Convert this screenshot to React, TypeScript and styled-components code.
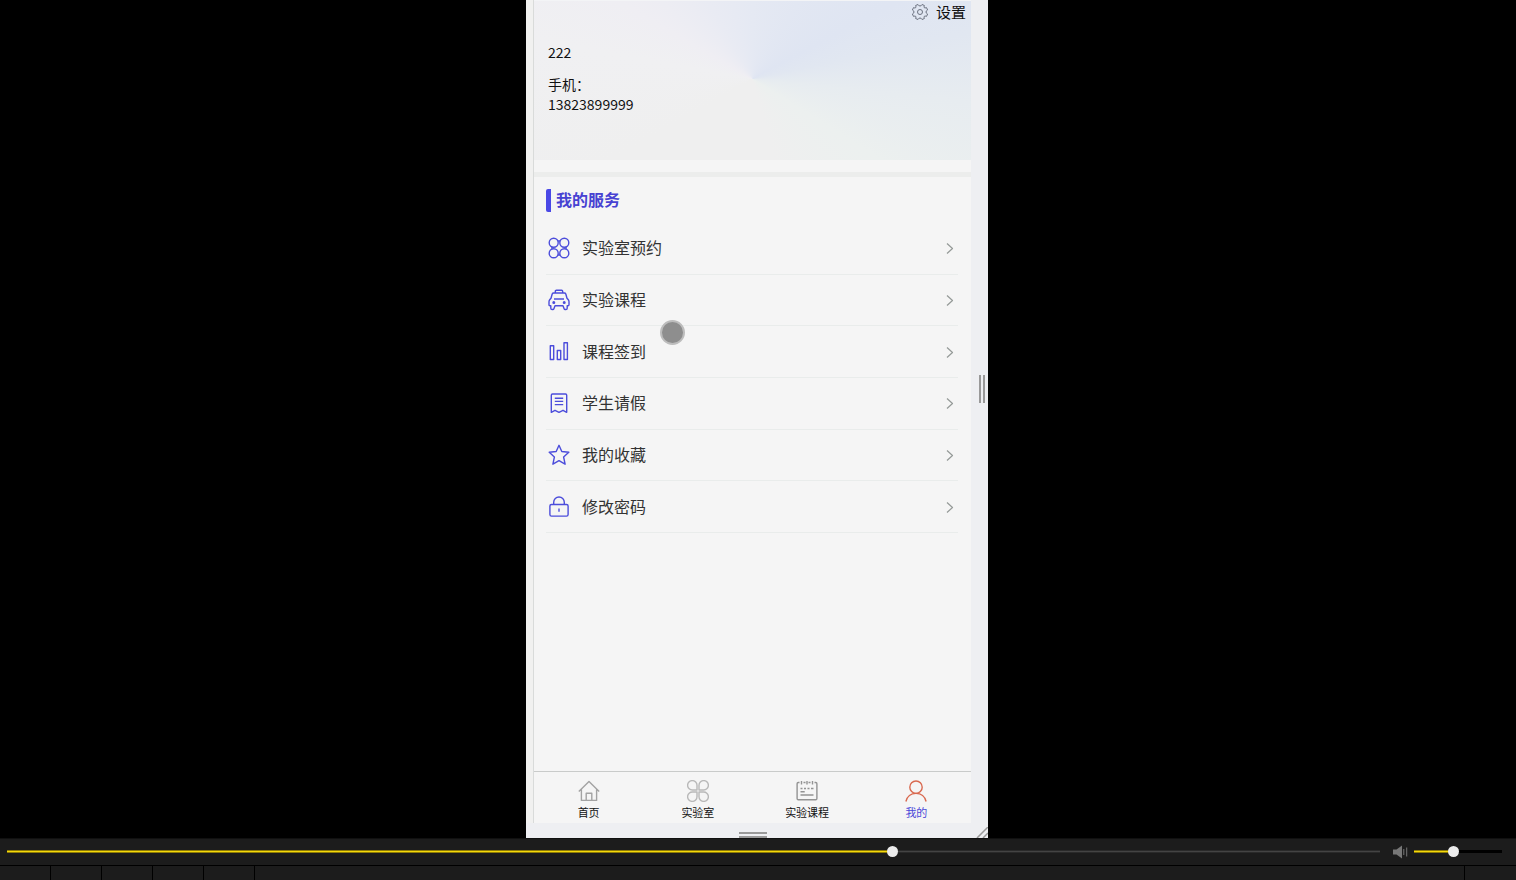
import React, { useState } from "react";
import styled, { createGlobalStyle } from "styled-components";

const GlobalStyle = createGlobalStyle`
  * { box-sizing: border-box; }
  body {
    margin: 0;
    background: #000;
    font-family: "Noto Sans CJK SC", "Noto Sans", sans-serif;
    font-size: 14px;
    line-height: 20px;
    color: #111;
  }
  button { font: inherit; color: inherit; border: 0; background: none; padding: 0; cursor: pointer; }
  ul { list-style: none; margin: 0; padding: 0; }
  h2, p { margin: 0; }
`;

const Page = styled.div`
  min-height: 100vh;
  display: flex;
  flex-direction: column;
`;

const Stage = styled.main`
  flex: 1;
  display: flex;
  justify-content: center;
  padding-right: 2px;
`;

const Device = styled.div`
  position: relative;
  width: 462px;
  max-width: 100%;
  display: grid;
  grid-template-columns: 7px minmax(0, 1fr) 17px;
  grid-template-rows: 1fr 15px;
  background: #eeeff2;
`;

const LeftEdge = styled.div`
  background: #f1f1f0;
`;

const Screen = styled.div`
  display: flex;
  flex-direction: column;
  background: #f5f5f5;
  border-left: 1px solid #d9dbda;
`;

const SideGrip = styled.div`
  display: flex;
  align-items: center;
  padding: 0 3px 46px 8px;
`;

const BottomGrip = styled.div`
  grid-column: 2;
  display: flex;
  justify-content: center;
  align-items: flex-end;
  padding-left: 1px;
`;

const Grip = styled.span<{ $vertical?: boolean }>`
  display: block;
  width: ${(p) => (p.$vertical ? "6px" : "28px")};
  height: ${(p) => (p.$vertical ? "28px" : "6px")};
  border: solid #999;
  border-width: ${(p) => (p.$vertical ? "0 2px" : "2px 0")};
`;

const Corner = styled.svg`
  justify-self: end;
  align-self: end;
`;

const Profile = styled.header`
  height: 160px;
  padding: 1px 5px 0 14px;
  display: flex;
  flex-direction: column;
  border-top: 1px solid #f3f4f6;
  background: conic-gradient(
    from 0deg at 50% 49%,
    #e5e9f3 0deg,
    #dfe5f2 62deg,
    #e1e7f1 78deg,
    #e7ecf0 96deg,
    #ecf0ef 122deg,
    #efefef 165deg,
    #efefef 240deg,
    #f0f0f2 280deg,
    #efeef3 300deg,
    #e9ebf3 330deg,
    #e5e9f3 360deg
  );
`;

const Settings = styled.button`
  align-self: flex-end;
  display: flex;
  align-items: center;
  gap: 7px;
  font-size: 15px;
  line-height: 20px;
`;

const UserName = styled.p`
  margin-top: 20px;
`;

const Phone = styled.p`
  margin-top: 12px;
`;

const PhoneLine = styled.span`
  display: block;
`;

const Divider = styled.div`
  height: 17px;
  border-bottom: 5px solid #ecedec;
`;

const Services = styled.section`
  flex: 1;
  padding: 12px 13px 0 12px;
`;

const Title = styled.h2`
  height: 23px;
  padding-left: 5px;
  border-left: 5px solid #4a48e6;
  border-radius: 2px;
  color: #4742d2;
  font-size: 16px;
  line-height: 20px;
  font-weight: 700;
`;

const ServiceList = styled.ul`
  min-height: 310px;
  margin-top: 11px;
  display: grid;
  grid-auto-rows: 1fr;
`;

const ServiceItem = styled.li`
  display: flex;
  border-bottom: 1px solid #e9eceb;
`;

const ServiceButton = styled.button`
  flex: 1;
  display: flex;
  align-items: center;
  gap: 12px;
  padding: 0 2px;
  color: #333;
  font-size: 16px;
  line-height: 24px;
  text-align: left;
`;

const ServiceLabel = styled.span`
  flex: 1;
  padding-bottom: 2px;
`;

const Icon = styled.svg<{ $color: string; $size?: number }>`
  display: block;
  flex: none;
  width: ${(p) => p.$size ?? 22}px;
  height: ${(p) => p.$size ?? 22}px;
  fill: none;
  stroke: ${(p) => p.$color};
  stroke-width: 1.4;
  stroke-linejoin: round;
`;

const TabBar = styled.nav`
  height: 52px;
  display: grid;
  grid-template-columns: repeat(4, 1fr);
  border-top: 1px solid #c9cbca;
`;

const Tab = styled.button<{ $active?: boolean }>`
  display: flex;
  flex-direction: column;
  align-items: center;
  gap: 2px;
  padding-top: 8px;
  color: ${(p) => (p.$active ? "#4a48d8" : "#111")};
  font-size: 11px;
  line-height: 16px;
`;

const TouchPoint = styled.span`
  position: absolute;
  left: 134px;
  top: 320px;
  width: 25px;
  height: 25px;
  border: 2px solid #bdbdbd;
  border-radius: 50%;
  background: #8e8e8e;
`;

const Player = styled.footer`
  background: #1c1c1c;
  border-top: 1px solid #101010;
`;

const Controls = styled.div`
  height: 26px;
  display: flex;
  align-items: center;
  padding: 0 14px 1px 7px;
`;

const Slider = styled.input<{ $rest: string; $width?: number }>`
  appearance: none;
  margin: 0;
  height: 11px;
  min-width: 0;
  background: transparent;
  ${(p) => (p.$width ? `width: ${p.$width}px;` : "flex: 1;")}
  &::-webkit-slider-runnable-track {
    height: 3px;
    background:
      linear-gradient(#8f7c06 0 1px, #f5d90a 1px 2px, #8f7c06 2px) 0 0 / var(--filled) 100% no-repeat,
      ${(p) => p.$rest};
  }
  &::-webkit-slider-thumb {
    appearance: none;
    width: 11px;
    height: 11px;
    margin-top: -4px;
    border-radius: 50%;
    background: #ececec;
  }
`;

const Speaker = styled.svg`
  flex: none;
  margin: 0 6px 0 13px;
`;

const Toolbar = styled.div`
  height: 15px;
  display: flex;
  padding-right: 1px;
  border-top: 1px solid #000;
`;

const Slot = styled.span<{ $last?: boolean }>`
  width: 51px;
  border: solid #000;
  border-width: ${(p) => (p.$last ? "0 0 0 1px" : "0 1px 0 0")};
  margin-left: ${(p) => (p.$last ? "auto" : "0")};
`;

const BLUE = "#4c4ddb";

const services = [
  {
    label: "实验室预约",
    icon: (
      <>
        <circle cx="5.7" cy="5.7" r="4.5" />
        <circle cx="16.3" cy="5.7" r="4.5" />
        <circle cx="5.7" cy="16.3" r="4.5" />
        <circle cx="16.3" cy="16.3" r="4.5" />
        <path d="M9.8 4h2.400M9.800 18h2.400M4 9.800v2.400M18 9.800v2.400" />
      </>
    ),
  },
  {
    label: "实验课程",
    icon: (
      <>
        <path d="M7.3 4V2.400Q7.300 1.300 8.400 1.300h5.200q1.100 0 1.100 1.100V4" />
        <path d="M5.600 4h10.800q1 0 1.400 1L19 9.200l1.300 1.600q.7.900.7 2v3q0 1-1 1h-.8v2.400q0 1.300-1.300 1.300h-.6q-1 0-1.300-1l-1-2.700H7l-1 2.700q-.3 1-1.300 1h-.6q-1.300 0-1.300-1.300v-2.400H2q-1 0-1-1v-3q0-1.100.7-2L3 9.200 4.200 5q.4-1 1.400-1zM6 10h10" />
        <circle cx="5.8" cy="13.600" r=".8" fill={BLUE} />
        <circle cx="16.200" cy="13.600" r=".8" fill={BLUE} />
      </>
    ),
  },
  {
    label: "课程签到",
    icon: <path d="M2.3 4.700h3.400v13.800H2.300zM9.300 9.500h3.400v9H9.300zM16 1.700h3.400v16.800H16z" />,
  },
  {
    label: "学生请假",
    icon: (
      <path d="M4.500 2h13q1.200 0 1.200 1.200V20.300L15 18.300l-4 2-4-2-3.700 2V3.200Q3.300 2 4.500 2zM6.800 6.200h8.400M6.800 9.400h8.400M6.800 12.600h8.400" />
    ),
  },
  {
    label: "我的收藏",
    icon: <path d="m11 1.300 2.800 6.200 7 .8-5.200 4.700 1.500 7.200-6.100-3.600-6.100 3.600L6.400 13 1.200 8.300l7-.8z" />,
  },
  {
    label: "修改密码",
    icon: (
      <>
        <rect x="1.900" y="8.500" width="18.200" height="11.600" rx="1.600" />
        <path d="M5.700 8.500V6.300a5.300 5.300 0 0 1 10.600 0v2.200M11 12.600v3.200" />
      </>
    ),
  },
];

const tabs = [
  {
    label: "首页",
    color: "#a3a3a3",
    icon: <path d="M.8 11.600 11 1.400l10.200 10.200M3.400 9.200v11.200h15.200V9.200M8.200 20.400v-7.200h5.600v7.200" />,
  },
  {
    label: "实验室",
    color: "#b8b8b8",
    icon: (
      <path d="M10 10H5.700A4.700 4.700 0 1 1 10 5.500zM12 10V5.500a4.700 4.700 0 1 1 4.300 4.500zM10 12v4.500A4.700 4.700 0 1 1 5.700 12zM12 12h4.300a4.700 4.700 0 1 1-4.300 4.500z" />
    ),
  },
  {
    label: "实验课程",
    color: "#939393",
    icon: (
      <>
        <path d="M3.500 2.500H2.300Q1.100 2.500 1.100 3.700v14.800q0 1.200 1.200 1.200h17.400q1.200 0 1.200-1.200V3.700q0-1.200-1.200-1.200h-1.200M7.500 2.500h2M12.500 2.500h2" />
        <path d="M5.500 1v3.500M11 1v3.500M16.500 1v3.500" />
        <path d="M4.500 8.500h2M8 8.500h2M11.500 8.500h2M15 8.500h2.500M4.500 11.800h4.200M4.500 15h13" />
      </>
    ),
  },
  {
    label: "我的",
    color: "#d9694f",
    active: true,
    icon: (
      <>
        <circle cx="11" cy="7.200" r="6.200" />
        <path d="M.9 21.500C2 16.600 6 13.400 11 13.400s9 3.200 10.100 8.100" />
      </>
    ),
  },
];

type RangeSliderProps = { label: string; initial: number; rest: string; width?: number };

function RangeSlider({ label, initial, rest, width }: RangeSliderProps) {
  const [value, setValue] = useState(initial);
  return (
    <Slider
      type="range"
      aria-label={label}
      min={0}
      max={1000}
      value={value}
      onChange={(e) => setValue(Number(e.target.value))}
      $rest={rest}
      $width={width}
      style={{ "--filled": `${value / 10}%` } as React.CSSProperties}
    />
  );
}

export default function App() {
  return (
    <Page>
      <GlobalStyle />
      <Stage>
        <Device>
          <LeftEdge />
          <Screen>
            <Profile>
              <Settings type="button">
                <Icon viewBox="0 0 18 18" $size={18} $color="#6c7280">
                  <g strokeWidth="1">
                    <path d="M7 1.500Q7.600 3 9 3T11 1.500L13.400 2.500Q12.700 4.200 13.300 4.700T15.500 4.600L16.600 7Q15 7.700 15 9T16.600 11L15.500 13.400Q13.900 12.700 13.300 13.300T13.400 15.500L11 16.500Q10.400 15 9 15T7 16.500L4.600 15.500Q5.300 13.800 4.700 13.300T2.500 13.400L1.400 11Q3 10.300 3 9T1.400 7L2.500 4.600Q4.100 5.300 4.700 4.700T4.600 2.500Z" />
                    <circle cx="9" cy="9" r="2.500" />
                  </g>
                </Icon>
                设置
              </Settings>
              <UserName>222</UserName>
              <Phone>
                <PhoneLine>手机：</PhoneLine>
                <PhoneLine>13823899999</PhoneLine>
              </Phone>
            </Profile>
            <Divider />
            <Services>
              <Title>我的服务</Title>
              <ServiceList>
                {services.map((s) => (
                  <ServiceItem key={s.label}>
                    <ServiceButton type="button">
                      <Icon viewBox="0 0 22 22" $color={BLUE}>
                        {s.icon}
                      </Icon>
                      <ServiceLabel>{s.label}</ServiceLabel>
                      <Icon viewBox="0 0 12 12" $size={12} $color="#959a98">
                        <path d="m3 1.500 5.500 5L3 11.500" strokeWidth="1.200" />
                      </Icon>
                    </ServiceButton>
                  </ServiceItem>
                ))}
              </ServiceList>
            </Services>
            <TabBar>
              {tabs.map((t) => (
                <Tab key={t.label} type="button" $active={t.active}>
                  <Icon viewBox="0 0 22 22" $color={t.color}>
                    {t.icon}
                  </Icon>
                  {t.label}
                </Tab>
              ))}
            </TabBar>
          </Screen>
          <SideGrip>
            <Grip $vertical />
          </SideGrip>
          <BottomGrip>
            <Grip />
          </BottomGrip>
          <Corner width="12" height="11" viewBox="0 0 12 11" stroke="#999" strokeWidth="1.500">
            <path d="M1 11 12 0M7 11l5-5" />
          </Corner>
          <TouchPoint />
        </Device>
      </Stage>
      <Player>
        <Controls>
          <RangeSlider
            label="播放进度"
            initial={646}
            rest="linear-gradient(#2a2a2a 0 1px, #444 1px 2px, #2a2a2a 2px)"
          />
          <Speaker width="15" height="14" viewBox="0 0 15 14" fill="#777">
            <path d="M0 4.500h3.500L9 .5v13L3.500 9.500H0z" />
            <path d="M10.300 4h1v6h-1zM13.200 2.500h1v9h-1z" />
          </Speaker>
          <RangeSlider label="音量" initial={440} rest="#000" width={88} />
        </Controls>
        <Toolbar>
          <Slot />
          <Slot />
          <Slot />
          <Slot />
          <Slot />
          <Slot $last />
        </Toolbar>
      </Player>
    </Page>
  );
}
